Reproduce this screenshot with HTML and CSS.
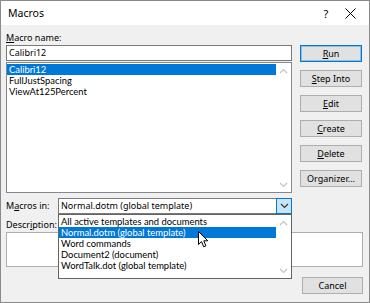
FILE: index.html
```html
<!DOCTYPE html>
<html>
<head>
<meta charset="utf-8">
<link rel="stylesheet" href="styles.css">
</head>
<body>
<div class="win">
  <div class="titlebar">
    <span class="title">Macros</span>
    <span class="help">?</span>
    <span class="close"><svg width="11" height="11" viewBox="0 0 11 11"><path d="M0.5 0.5 L10.5 10.5 M10.5 0.5 L0.5 10.5" stroke="#000" stroke-width="1" fill="none"/></svg></span>
  </div>
  <div class="content">
    <div class="main">
      <div class="left">
        <div class="label"><u>M</u>acro name:</div>
        <div class="input">Calibri12</div>
        <div class="list">
          <div class="items">
            <div class="item sel">Calibri12</div>
            <div class="item">FullJustSpacing</div>
            <div class="item">ViewAt125Percent</div>
          </div>
          <div class="scroll">
            <svg width="9" height="6" viewBox="0 0 9 6"><path d="M1 5 L4.5 1.5 L8 5" stroke="#c2c2c2" stroke-width="1.2" fill="none"/></svg>
            <svg width="9" height="6" viewBox="0 0 9 6"><path d="M1 1 L4.5 4.5 L8 1" stroke="#c2c2c2" stroke-width="1.2" fill="none"/></svg>
          </div>
        </div>
      </div>
      <div class="buttons">
        <button class="btn default"><u>R</u>un</button>
        <button class="btn"><u>S</u>tep Into</button>
        <button class="btn"><u>E</u>dit</button>
        <button class="btn"><u>C</u>reate</button>
        <button class="btn"><u>D</u>elete</button>
        <button class="btn">Organizer...</button>
      </div>
    </div>
    <div class="inrow">
      <span class="label inlabel">M<u>a</u>cros in:</span>
      <div class="combo">
        <span class="combo-text">Normal.dotm (global template)</span>
        <span class="combo-btn"><svg width="9" height="6" viewBox="0 0 9 6"><path d="M1 1 L4.5 4.5 L8 1" stroke="#333" stroke-width="1.2" fill="none"/></svg></span>
        <div class="dropdown">
          <div class="items">
            <div class="item">All active templates and documents</div>
            <div class="item sel">Normal.dotm (global template)</div>
            <div class="item">Word commands</div>
            <div class="item">Document2 (document)</div>
            <div class="item">WordTalk.dot (global template)</div>
          </div>
          <div class="scroll">
            <svg width="9" height="6" viewBox="0 0 9 6"><path d="M1 5 L4.5 1.5 L8 5" stroke="#c2c2c2" stroke-width="1.2" fill="none"/></svg>
            <svg width="9" height="6" viewBox="0 0 9 6"><path d="M1 1 L4.5 4.5 L8 1" stroke="#c2c2c2" stroke-width="1.2" fill="none"/></svg>
          </div>
        </div>
      </div>
    </div>
    <div class="label desc-label">Descr<u>i</u>ption:</div>
    <div class="desc"></div>
    <div class="footer"><button class="btn cancel">Cancel</button></div>
  </div>
  <svg class="cursor" width="12" height="18" viewBox="0 0 12 18"><path d="M0.5 0.5 L0.5 13.5 L3.5 10.6 L5.7 15.8 L7.9 14.9 L5.8 9.8 L9.8 9.8 Z" fill="#fff" stroke="#000" stroke-width="1" stroke-linejoin="miter"/></svg>
</div>
</body>
</html>
```

FILE: styles.css
```css
* { box-sizing: border-box; }
html, body { margin: 0; padding: 0; background: #fff; }
body {
  font-family: "Noto Sans", "Open Sans", sans-serif;
  font-size: 9px;
  color: #000;
}
.win {
  position: relative;
  width: 370px;
  height: 303px;
  border: 1px solid #8a8a8a;
  background: #f0f0f0;
  overflow: hidden;
}
.titlebar {
  height: 24px;
  background: #fff;
  display: flex;
  align-items: center;
  padding-left: 7px;
}
.title {
  font-size: 10.5px;
  flex: 1;
  line-height: 24px;
}
.help {
  width: 20px;
  text-align: center;
  font-size: 11px;
}
.close {
  width: 28px;
  display: flex;
  justify-content: center;
  margin-right: 5px;
}
.content {
  padding: 7px 7px 0 5px;
}
.main {
  display: flex;
  gap: 8px;
}
.left {
  width: 286px;
  display: flex;
  flex-direction: column;
}
.label {
  line-height: 12px;
  height: 12px;
}
.left .label { margin-bottom: 1px; }
.input {
  height: 16px;
  border: 1px solid #7a7a7a;
  background: #fff;
  padding-left: 2px;
  line-height: 14px;
}
.list {
  margin-top: 1px;
  height: 131px;
  border: 1px solid #828790;
  background: #fff;
  display: flex;
}
.items {
  flex: 1;
  padding-top: 1px;
}
.item {
  font-family: "Lato", "Noto Sans", sans-serif;
  font-size: 9.4px;
  line-height: 11px;
  height: 11px;
  padding-left: 2px;
  white-space: nowrap;
}
.item.sel {
  background: #0078d7;
  color: #fff;
}
.scroll {
  width: 15px;
  display: flex;
  flex-direction: column;
  justify-content: space-between;
  align-items: center;
  padding: 5px 0 4px;
}
.buttons {
  width: 62px;
  padding-top: 13px;
  display: flex;
  flex-direction: column;
  gap: 8px;
}
.btn {
  height: 17px;
  width: 62px;
  border: 1px solid #adadad;
  background: #e1e1e1;
  font-family: inherit;
  font-size: 9px;
  color: #000;
  padding: 0;
  line-height: 15px;
  text-align: center;
}
.btn.default {
  border-color: #0078d7;
  box-shadow: inset 0 0 0 1px rgba(0, 120, 215, 0.35);
}
.inrow {
  margin-top: 5px;
  height: 16px;
  display: flex;
  align-items: center;
}
.inlabel {
  width: 52px;
}
.combo {
  position: relative;
  width: 234px;
  height: 16px;
  border: 1px solid #7a7a7a;
  background: #fff;
  display: flex;
}
.combo-text {
  flex: 1;
  padding-left: 2px;
  line-height: 14px;
}
.combo-btn {
  width: 16px;
  height: 16px;
  margin: -1px -1px -1px 0;
  border: 1px solid #0078d7;
  background: #cce4f7;
  display: flex;
  align-items: center;
  justify-content: center;
}
.dropdown {
  position: absolute;
  top: calc(100% + 1px);
  left: -1px;
  width: 234px;
  height: 65px;
  border: 1px solid #646464;
  background: #fff;
  display: flex;
  z-index: 2;
}
.dropdown .items { padding-top: 1px; }
.dropdown .scroll { padding: 5px 0 4px; }
.desc-label {
  margin-top: 5px;
  margin-bottom: 1px;
}
.desc {
  height: 35px;
  margin-right: -1px;
  border: 1px solid #adadad;
  background: #fff;
}
.footer {
  margin-top: 10px;
  margin-right: -1px;
  display: flex;
  justify-content: flex-end;
}
.btn.cancel { width: 61px; }
.cursor {
  position: absolute;
  left: 197px;
  top: 230px;
  z-index: 5;
}
```
